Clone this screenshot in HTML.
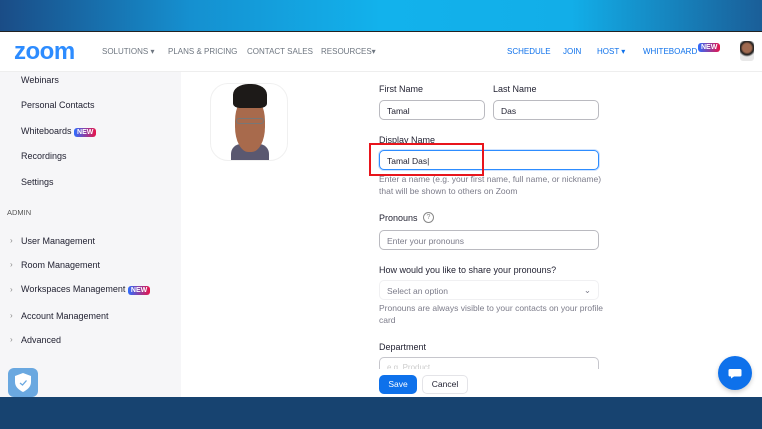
<!DOCTYPE html>
<html><head><meta charset="utf-8"><style>
*{margin:0;padding:0;box-sizing:border-box}
body{width:762px;height:429px;overflow:hidden;position:relative;font-family:"Liberation Sans",sans-serif;background:#fff}
.top{position:absolute;left:0;top:0;width:762px;height:32px;background:linear-gradient(90deg,#1a4c86 0%,#1590d0 25%,#12b2ec 50%,#12aee8 75%,#1a5e98 100%);border-bottom:1px solid #222}
.hdr{position:absolute;left:0;top:33px;width:762px;height:39px;background:#fff;border-bottom:1px solid #eee}
.logo{position:absolute;left:14px;top:5px;font-size:24px;font-weight:bold;color:#2d8cff;letter-spacing:-0.5px}
.nav{position:absolute;top:14px;font-size:8px;color:#6e7680}
.navr{position:absolute;top:14px;font-size:8px;color:#0e71eb}
.new{display:inline-block;background:linear-gradient(90deg,#2d6cff,#e8144a);color:#fff;font-size:7px;font-weight:bold;padding:1px 3px;border-radius:3px}
.side{position:absolute;left:0;top:72px;width:181px;height:325px;background:#f6f6f8}
.si{position:absolute;left:21px;font-size:9px;color:#232333}
.ch{position:absolute;left:10px;font-size:8px;color:#888}
.bot{position:absolute;left:0;top:397px;width:762px;height:32px;background:#174370}
.lbl{position:absolute;font-size:9px;color:#232333}
.inp{position:absolute;border:1px solid #babac0;border-radius:5px;height:20px;font-size:8.5px;color:#232333;padding:5px 7px;background:#fff}
.hint{position:absolute;font-size:8.5px;color:#7c7c8a;line-height:12px}
</style></head><body>
<div class="top"></div>
<div class="hdr">
<div class="logo">zoom</div>
<div class="nav" style="left:102px">SOLUTIONS ▾</div>
<div class="nav" style="left:168px">PLANS &amp; PRICING</div>
<div class="nav" style="left:247px">CONTACT SALES</div>
<div class="nav" style="left:321px">RESOURCES▾</div>
<div class="navr" style="left:507px">SCHEDULE</div>
<div class="navr" style="left:563px">JOIN</div>
<div class="navr" style="left:597px">HOST ▾</div>
<div class="navr" style="left:643px">WHITEBOARD</div>
<div class="new" style="position:absolute;left:698px;top:10px">NEW</div>
<div style="position:absolute;left:740px;top:8px;width:14px;height:20px;background:radial-gradient(circle at 50% 35%,#a06a50 30%,#1a1a1a 45%,#e8e8e8 60%);border-radius:3px"></div>
</div>
<div class="side">
<div class="si" style="top:3px">Webinars</div>
<div class="si" style="top:28px">Personal Contacts</div>
<div class="si" style="top:54px">Whiteboards <span class="new">NEW</span></div>
<div class="si" style="top:79px">Recordings</div>
<div class="si" style="top:105px">Settings</div>
<div style="position:absolute;left:7px;top:136px;font-size:7.5px;color:#555">ADMIN</div>
<div class="ch" style="top:164px">›</div><div class="si" style="top:164px">User Management</div>
<div class="ch" style="top:188px">›</div><div class="si" style="top:188px">Room Management</div>
<div class="ch" style="top:213px">›</div><div class="si" style="top:212px">Workspaces Management <span class="new">NEW</span></div>
<div class="ch" style="top:239px">›</div><div class="si" style="top:239px">Account Management</div>
<div class="ch" style="top:263px">›</div><div class="si" style="top:263px">Advanced</div>
<div style="position:absolute;left:8px;top:296px;width:30px;height:29px;background:#6aa8e0;border-radius:6px"><svg width="30" height="29" viewBox="0 0 30 29"><path d="M15 5 L23 8 V14 C23 19 19 22 15 24 C11 22 7 19 7 14 V8 Z" fill="#fff"/><path d="M12 15 L14.5 17 L18.5 12.5" stroke="#6aa8e0" stroke-width="1.3" fill="none"/></svg></div>
</div>
<div style="position:absolute;left:210px;top:83px;width:78px;height:78px;border-radius:18px;background:#fff;border:1px solid #f0f0f0;overflow:hidden">
<div style="position:absolute;left:20px;top:60px;width:38px;height:20px;background:#5a5870;border-radius:10px 10px 0 0"></div>
<div style="position:absolute;left:24px;top:12px;width:30px;height:56px;background:#a86a4c;border-radius:45%"></div>
<div style="position:absolute;left:22px;top:0px;width:34px;height:24px;background:#1d1a18;border-radius:45% 45% 20% 20%"></div>
<div style="position:absolute;left:25px;top:34px;width:28px;height:6px;border:1px solid #777;border-radius:3px"></div>
</div>
<div class="lbl" style="left:379px;top:84px">First Name</div>
<div class="lbl" style="left:493px;top:84px">Last Name</div>
<div class="inp" style="left:379px;top:100px;width:106px">Tamal</div>
<div class="inp" style="left:493px;top:100px;width:106px">Das</div>
<div class="lbl" style="left:379px;top:135px">Display Name</div>
<div class="inp" style="left:379px;top:150px;width:220px;border:1.5px solid #2d8cff;box-shadow:0 0 0 1px #cfe3ff">Tamal Das|</div>
<div style="position:absolute;left:369px;top:143px;width:115px;height:33px;border:2px solid #e8151c"></div>
<div class="hint" style="left:379px;top:173px">Enter a name (e.g. your first name, full name, or nickname)<br>that will be shown to others on Zoom</div>
<div class="lbl" style="left:379px;top:213px">Pronouns</div>
<div style="position:absolute;left:423px;top:212px;width:11px;height:11px;border:1px solid #888;border-radius:50%;font-size:7px;color:#888;text-align:center;line-height:9px">?</div>
<div class="inp" style="left:379px;top:230px;width:220px;color:#7c7c8a">Enter your pronouns</div>
<div class="lbl" style="left:379px;top:265px">How would you like to share your pronouns?</div>
<div class="inp" style="left:379px;top:280px;width:220px;border-color:#f0f0f2;color:#7c7c8a">Select an option<span style="position:absolute;right:7px;top:4px">⌄</span></div>
<div class="hint" style="left:379px;top:302px">Pronouns are always visible to your contacts on your profile<br>card</div>
<div class="lbl" style="left:379px;top:342px">Department</div>
<div style="position:absolute;left:379px;top:357px;width:220px;height:12px;border:1px solid #c6c6cc;border-bottom:none;border-radius:5px 5px 0 0;overflow:hidden;font-size:8px;color:#ccc;padding:5px 7px">e.g. Product</div>
<div style="position:absolute;left:379px;top:375px;width:38px;height:19px;background:#0e71eb;border-radius:5px;color:#fff;font-size:8.5px;text-align:center;line-height:19px">Save</div>
<div style="position:absolute;left:422px;top:375px;width:46px;height:19px;border:1px solid #e4e4e8;border-radius:5px;color:#232333;font-size:8.5px;text-align:center;line-height:17px">Cancel</div>
<div style="position:absolute;left:718px;top:356px;width:34px;height:34px;background:#0e71eb;border-radius:50%;box-shadow:0 2px 5px rgba(0,0,0,.2)"><svg width="34" height="34" viewBox="0 0 34 34"><path d="M12 13 h10 a1.5 1.5 0 0 1 1.5 1.5 v4.5 a1.5 1.5 0 0 1 -1.5 1.5 h-6 l-3 2 v-2 h-1 a1.5 1.5 0 0 1 -1.5 -1.5 v-4.5 a1.5 1.5 0 0 1 1.5 -1.5z" fill="#fff"/></svg></div>
<div class="bot"></div>
</body></html>
